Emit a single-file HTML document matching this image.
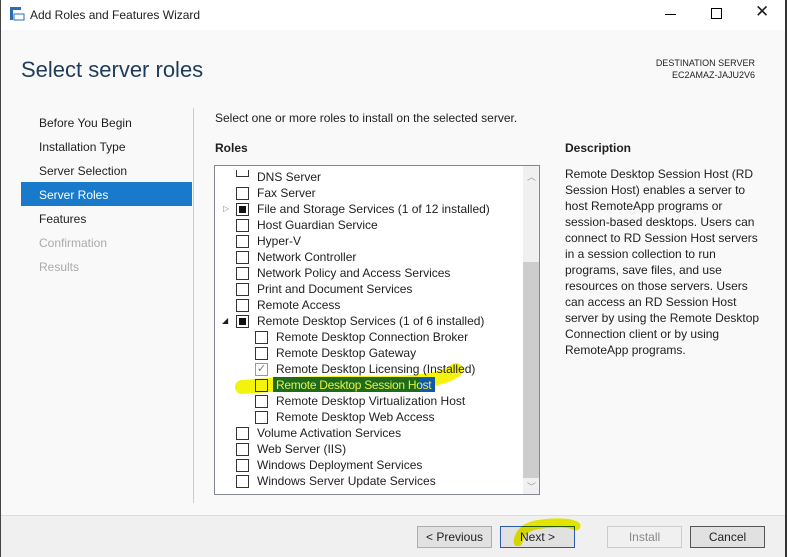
<!DOCTYPE html>
<html><head><style>
body{margin:0;width:788px;height:557px;overflow:hidden;font-family:"Segoe UI","Liberation Sans",sans-serif;font-size:12px;color:#1e1e1e;background:#fff;position:relative}
.a{position:absolute;white-space:nowrap}
.cb{position:absolute;width:11px;height:11px;border:1px solid #333;background:#fff}
.cb.f::after{content:"";position:absolute;left:2px;top:2px;width:7px;height:7px;background:#111}
.btn{position:absolute;top:526px;width:73px;height:20px;border:1px solid #adadad;background:#e1e1e1;text-align:center;line-height:20px}
</style></head><body>
<div class="a" style="left:0;top:0;width:788px;height:30px;background:#fff"></div>
<div class="a" style="left:0;top:30px;width:786px;height:527px;background:#f9f9f9"></div>
<div class="a" style="left:0;top:0;width:1px;height:557px;background:#444"></div>
<div class="a" style="left:785px;top:0;width:2px;height:557px;background:#333"></div>
<svg class="a" style="left:9px;top:6px" width="16" height="16"><rect x="1" y="1" width="3" height="13" fill="#2a6db5"/><rect x="1" y="1" width="11" height="3" fill="#2a6db5"/><rect x="5" y="8" width="10" height="6" fill="#fff" stroke="#2a6db5"/></svg>
<div class="a" style="left:30px;top:8px;font-size:12px">Add Roles and Features Wizard</div>
<div class="a" style="left:665px;top:14px;width:11px;height:1px;background:#000"></div>
<div class="a" style="left:711px;top:8px;width:9px;height:9px;border:1px solid #000"></div>
<div class="a" style="left:755px;top:2px;font-size:17px;font-weight:300">✕</div>
<div class="a" style="left:21px;top:57px;font-size:22px;color:#1e3c5a;font-weight:300">Select server roles</div>
<div class="a" style="left:600px;top:57px;font-size:9px;text-align:right;width:155px;line-height:12px">DESTINATION SERVER<br>EC2AMAZ-JAJU2V6</div>
<div class="a" style="left:193px;top:108px;width:1px;height:395px;background:#ccc"></div>
<div class="a" style="left:39px;top:116px">Before You Begin</div>
<div class="a" style="left:39px;top:140px">Installation Type</div>
<div class="a" style="left:39px;top:164px">Server Selection</div>
<div class="a" style="left:21px;top:182px;width:171px;height:24px;background:#1979ca"></div>
<div class="a" style="left:39px;top:188px;color:#fff">Server Roles</div>
<div class="a" style="left:39px;top:212px">Features</div>
<div class="a" style="left:39px;top:236px;color:#aaa">Confirmation</div>
<div class="a" style="left:39px;top:260px;color:#aaa">Results</div>
<div class="a" style="left:215px;top:111px">Select one or more roles to install on the selected server.</div>
<div class="a" style="left:215px;top:141px;font-weight:bold">Roles</div>
<div class="a" style="left:565px;top:141px;font-weight:bold">Description</div>
<div class="a" style="left:565px;top:166px;line-height:16px;white-space:normal;width:200px">Remote Desktop Session Host (RD Session Host) enables a server to host RemoteApp programs or session-based desktops. Users can connect to RD Session Host servers in a session collection to run programs, save files, and use resources on those servers. Users can access an RD Session Host server by using the Remote Desktop Connection client or by using RemoteApp programs.</div>
<div class="a" style="left:214px;top:165px;width:324px;height:328px;border:1px solid #828790;background:#fff;overflow:hidden">
<div class="a" style="left:308px;top:0;width:16px;height:328px;background:#f0f0f0"></div>
<div class="a" style="left:308px;top:96px;width:16px;height:216px;background:#cdcdcd"></div>
<div class="a" style="left:312px;top:4px;font-size:9px;color:#999">︿</div>
<div class="a" style="left:312px;top:314px;font-size:9px;color:#999">﹀</div>
</div>
<svg class="a" style="left:220px;top:360px" width="250" height="40"><path d="M22 27 Q80 22 150 23 T236 10" stroke="#f2f200" stroke-width="14" fill="none" stroke-linecap="round" opacity="0.95"/></svg>
<div class="a" style="left:273px;top:377px;width:162px;height:15px;background:#1e6b1e"></div>
<div class="a" style="left:420px;top:377px;width:15px;height:15px;background:#0e58b0"></div>
<div class="a" style="left:1px;top:515px;width:784px;height:1px;background:#ddd"></div>
<div class="a" style="left:1px;top:516px;width:784px;height:41px;background:#f0f0f0"></div>
<div class="btn" style="left:417px">&lt; Previous</div>
<div class="btn" style="left:500px;border-color:#2b5ba8">Next &gt;</div>
<div class="btn" style="left:607px;color:#888;background:#f0f0f0;border-color:#ccc">Install</div>
<div class="btn" style="left:690px;border-color:#555">Cancel</div>
<svg class="a" style="left:512px;top:516px;mix-blend-mode:multiply" width="70" height="30"><path d="M6 26 Q8 10 30 8 Q55 5 64 10" stroke="#f2f200" stroke-width="9" fill="none" stroke-linecap="round"/></svg>
<div class="a" style="left:236px;top:170px;width:11px;height:6px;border:1px solid #333;border-top:none;background:#fff"></div><div class="a" style="left:257px;top:170px">DNS Server</div>
<div class="cb" style="left:236px;top:187px"></div><div class="a" style="left:257px;top:186px">Fax Server</div>
<div class="a" style="left:223px;top:204px;font-size:8px;color:#888">▷</div><div class="cb f" style="left:236px;top:203px"></div><div class="a" style="left:257px;top:202px">File and Storage Services (1 of 12 installed)</div>
<div class="cb" style="left:236px;top:219px"></div><div class="a" style="left:257px;top:218px">Host Guardian Service</div>
<div class="cb" style="left:236px;top:235px"></div><div class="a" style="left:257px;top:234px">Hyper-V</div>
<div class="cb" style="left:236px;top:251px"></div><div class="a" style="left:257px;top:250px">Network Controller</div>
<div class="cb" style="left:236px;top:267px"></div><div class="a" style="left:257px;top:266px">Network Policy and Access Services</div>
<div class="cb" style="left:236px;top:283px"></div><div class="a" style="left:257px;top:282px">Print and Document Services</div>
<div class="cb" style="left:236px;top:299px"></div><div class="a" style="left:257px;top:298px">Remote Access</div>
<div class="a" style="left:222px;top:316px;font-size:8px">◢</div><div class="cb f" style="left:236px;top:315px"></div><div class="a" style="left:257px;top:314px">Remote Desktop Services (1 of 6 installed)</div>
<div class="cb" style="left:255px;top:331px"></div><div class="a" style="left:276px;top:330px">Remote Desktop Connection Broker</div>
<div class="cb" style="left:255px;top:347px"></div><div class="a" style="left:276px;top:346px">Remote Desktop Gateway</div>
<div class="cb" style="left:255px;top:363px;border-color:#999;color:#777;font-size:11px;line-height:11px;text-align:center">✓</div><div class="a" style="left:276px;top:362px">Remote Desktop Licensing (Installed)</div>
<div class="cb" style="left:255px;top:379px;background:transparent"></div><div class="a" style="left:276px;top:378px;color:#e8f040;letter-spacing:-0.3px">Remote Desktop Session Host</div>
<div class="cb" style="left:255px;top:395px"></div><div class="a" style="left:276px;top:394px">Remote Desktop Virtualization Host</div>
<div class="cb" style="left:255px;top:411px"></div><div class="a" style="left:276px;top:410px">Remote Desktop Web Access</div>
<div class="cb" style="left:236px;top:427px"></div><div class="a" style="left:257px;top:426px">Volume Activation Services</div>
<div class="cb" style="left:236px;top:443px"></div><div class="a" style="left:257px;top:442px">Web Server (IIS)</div>
<div class="cb" style="left:236px;top:459px"></div><div class="a" style="left:257px;top:458px">Windows Deployment Services</div>
<div class="cb" style="left:236px;top:475px"></div><div class="a" style="left:257px;top:474px">Windows Server Update Services</div>
</body></html>
